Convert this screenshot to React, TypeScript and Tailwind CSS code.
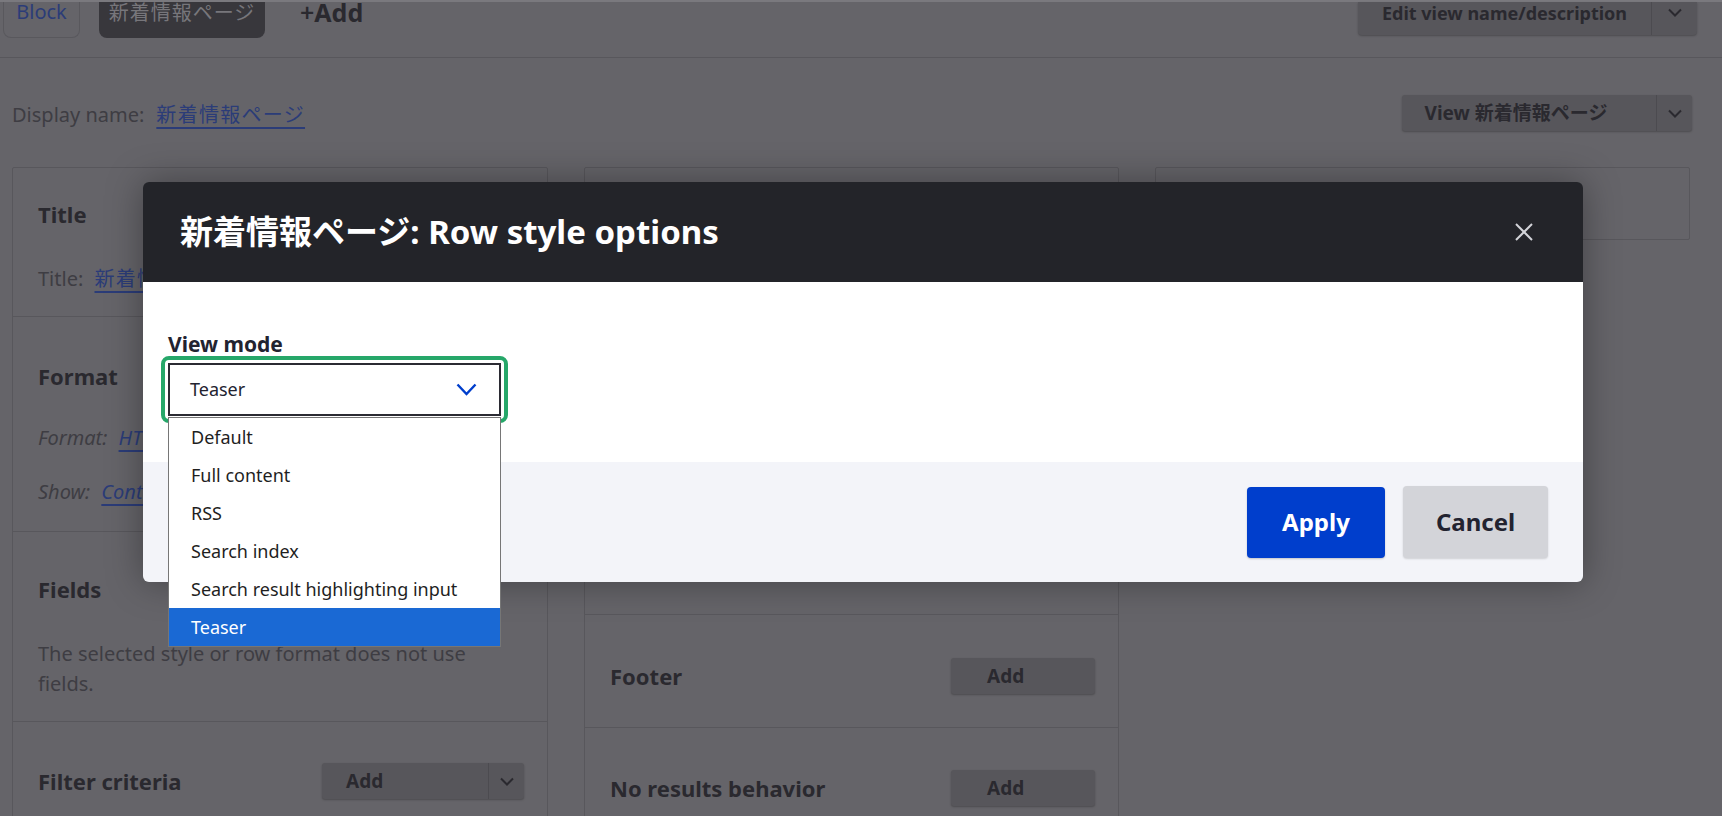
import React from "react";

const options = ["Default", "Full content", "RSS", "Search index", "Search result highlighting input", "Teaser"];

function Chevron({ className }: { className?: string }) {
    return (
        <svg className={className} width="14" height="9" viewBox="0 0 14 9" fill="none" stroke="currentColor" strokeWidth="2">
            <polyline points="1,1.5 7,7.5 13,1.5" />
        </svg>
    );
}

function AddButton({ split }: { split?: boolean }) {
    return (
        <div className="flex h-[36px] rounded-[3px] bg-[#57565b] shadow-[0_1px_2px_rgba(0,0,0,0.25)]">
            <div className={split ? "w-[166px] flex items-center pl-[24px] text-[19px] font-bold" : "w-[144px] flex items-center pl-[36px] text-[19px] font-bold"}>
                Add
            </div>
            {split && (
                <>
                    <div className="w-px bg-[#4c4b50]" />
                    <div className="w-[35px] flex items-center justify-center">
                        <Chevron className="text-[#2a292f]" />
                    </div>
                </>
            )}
        </div>
    );
}

export default function App() {
    return (
        <div className="relative w-[1722px] h-[816px] overflow-hidden bg-[#656469] text-[#2a292f] font-['Noto_Sans','Noto_Sans_CJK_JP',sans-serif]">
            <div className="h-[2px] bg-[#7a797e]" />

            {/* top bar */}
            <div className="h-[56px] border-b border-[#58575c] flex items-start justify-between pl-[3px] pr-[25px]">
                <div className="flex items-start">
                    <div className="h-[36px] w-[77px] border border-t-0 border-[#59585d] rounded-b-[8px] flex items-end justify-center pb-[14px] text-[20px] leading-[22px] text-[#2b3c78]">
                        Block
                    </div>
                    <div className="ml-[19px] h-[36px] w-[166px] bg-[#38373c] rounded-b-[8px] flex items-end justify-center pb-[14px] text-[20px] leading-[22px] tracking-[1px] text-[#77767b]">
                        新着情報ページ
                    </div>
                    <div className="ml-[35px] -mt-[2px] text-[25px] leading-[24px] font-bold text-[#2a292f]">
                        <span className="font-semibold">+</span>Add
                    </div>
                </div>
                <div className="flex h-[33px] bg-[#57565b] rounded-b-[4px] shadow-[0_1px_2px_rgba(0,0,0,0.25)]">
                    <div className="w-[293px] flex items-center justify-center pb-[12px] text-[18px] leading-[22px] font-bold">
                        Edit view name/description
                    </div>
                    <div className="w-px bg-[#4c4b50]" />
                    <div className="w-[45px] flex items-center justify-center pb-[12px]">
                        <Chevron className="text-[#2a292f]" />
                    </div>
                </div>
            </div>

            {/* display name row */}
            <div className="flex items-center justify-between pl-[12px] pr-[30px] pt-[37px]">
                <div className="text-[20px] text-[#3e3d43] pt-[3px]">
                    Display name:
                    <span className="ml-[12px] tracking-[1.3px] underline underline-offset-[5px] text-[#2b3c78]">新着情報ページ</span>
                </div>
                <div className="flex h-[36px] bg-[#57565b] rounded-[3px] shadow-[0_1px_2px_rgba(0,0,0,0.25)]">
                    <div className="w-[254px] flex items-center justify-center pr-[26px] text-[19px] font-bold">
                        View 新着情報ページ
                    </div>
                    <div className="w-px bg-[#4c4b50]" />
                    <div className="w-[35px] flex items-center justify-center">
                        <Chevron className="text-[#2a292f]" />
                    </div>
                </div>
            </div>

            {/* columns */}
            <div className="flex items-start gap-[36px] pl-[12px] mt-[36px]">
                <div className="w-[536px] h-[700px] border border-[#58575c] rounded-[2px]">
                    <div className="px-[25px] pt-[31px] pb-[22px] border-b border-[#58575c]">
                        <h3 className="text-[22px] leading-[30px] font-bold">Title</h3>
                        <p className="mt-[35px] text-[20px] leading-[30px] text-[#3e3d43]">
                            Title: <span className="ml-[6px] tracking-[1.3px] underline underline-offset-[5px] text-[#2b3c78]">新着情報ページ</span>
                        </p>
                    </div>
                    <div className="px-[25px] pt-[44px] pb-[24px] border-b border-[#58575c]">
                        <h3 className="text-[22px] leading-[30px] font-bold">Format</h3>
                        <p className="mt-[32px] text-[20px] leading-[30px] italic text-[#3e3d43]">
                            Format: <span className="ml-[6px] underline underline-offset-[5px] text-[#2b3c78]">HTML list</span>
                        </p>
                        <p className="mt-[24px] text-[20px] leading-[30px] italic text-[#3e3d43]">
                            Show: <span className="ml-[6px] underline underline-offset-[5px] text-[#2b3c78]">Content</span>
                        </p>
                    </div>
                    <div className="px-[25px] pt-[42px] pb-[22px] border-b border-[#58575c]">
                        <h3 className="text-[22px] leading-[30px] font-bold">Fields</h3>
                        <p className="mt-[35px] text-[20px] leading-[30px] text-[#3e3d43]">
                            The selected style or row format does not use fields.
                        </p>
                    </div>
                    <div className="pl-[25px] pr-[23px] pt-[41px] flex items-center justify-between">
                        <h3 className="text-[22px] leading-[30px] font-bold">Filter criteria</h3>
                        <AddButton split />
                    </div>
                </div>

                <div className="w-[535px] h-[700px] border border-[#58575c] rounded-[2px]">
                    <div className="h-[447px] border-b border-[#58575c]" />
                    <div className="pl-[25px] pr-[23px] pt-[43px] pb-[33px] flex items-center justify-between border-b border-[#58575c]">
                        <h3 className="text-[22px] leading-[30px] font-bold">Footer</h3>
                        <AddButton />
                    </div>
                    <div className="pl-[25px] pr-[23px] pt-[42px] flex items-center justify-between">
                        <h3 className="text-[22px] leading-[30px] font-bold">No results behavior</h3>
                        <AddButton />
                    </div>
                </div>

                <div className="w-[535px] h-[73px] border border-[#58575c] rounded-[2px]" />
            </div>

            {/* dialog */}
            <div className="absolute left-[143px] top-[182px] w-[1440px] rounded-[6px] shadow-[0_0_36px_rgba(0,0,0,0.35)]">
                <div className="h-[100px] bg-[#232429] rounded-t-[6px] flex items-center justify-between pl-[37px] pr-[50px]">
                    <h2 className="text-[33px] font-bold text-white">新着情報ページ: Row style options</h2>
                    <svg width="18" height="18" viewBox="0 0 18 18" stroke="#d3d4d9" strokeWidth="2">
                        <line x1="1" y1="1" x2="17" y2="17" />
                        <line x1="17" y1="1" x2="1" y2="17" />
                    </svg>
                </div>
                <div className="h-[180px] bg-white pl-[18px] pt-[50px]">
                    <label className="block ml-[7px] text-[21px] leading-[24px] font-bold text-[#222330]">View mode</label>
                    <div className="relative w-[347px] border-[4px] border-[#26a769] rounded-[8px] p-[3px]">
                        <div className="h-[53px] border-2 border-[#2b2b33] flex items-center justify-between pl-[20px] pr-[22px] text-[18px] text-[#222330]">
                            Teaser
                            <svg width="21" height="13" viewBox="0 0 21 13" fill="none" stroke="#003ecc" strokeWidth="2.4">
                                <polyline points="1.5,1.5 10.5,11 19.5,1.5" />
                            </svg>
                        </div>
                        <div className="absolute left-[3px] top-[57px] w-[333px] border border-[#767676] bg-white z-10">
                            {options.map((o) => (
                                <div
                                    key={o}
                                    className={o === "Teaser"
                                        ? "h-[38px] flex items-center pl-[22px] text-[18px] bg-[#1a69d4] text-white"
                                        : "h-[38px] flex items-center pl-[22px] text-[18px] text-[#1f1f1f]"}
                                >
                                    {o}
                                </div>
                            ))}
                        </div>
                    </div>
                </div>
                <div className="h-[120px] bg-[#f3f4f9] rounded-b-[6px] flex items-center justify-end gap-[18px] pr-[35px]">
                    <button className="w-[138px] h-[71px] rounded-[4px] bg-[#003ecc] text-white text-[24px] font-bold shadow-[0_1px_2px_rgba(0,0,0,0.2)]">
                        Apply
                    </button>
                    <button className="w-[145px] h-[72px] rounded-[4px] bg-[#d3d4d9] text-[#222330] text-[24px] font-bold shadow-[0_1px_2px_rgba(0,0,0,0.15)]">
                        Cancel
                    </button>
                </div>
            </div>
        </div>
    );
}
